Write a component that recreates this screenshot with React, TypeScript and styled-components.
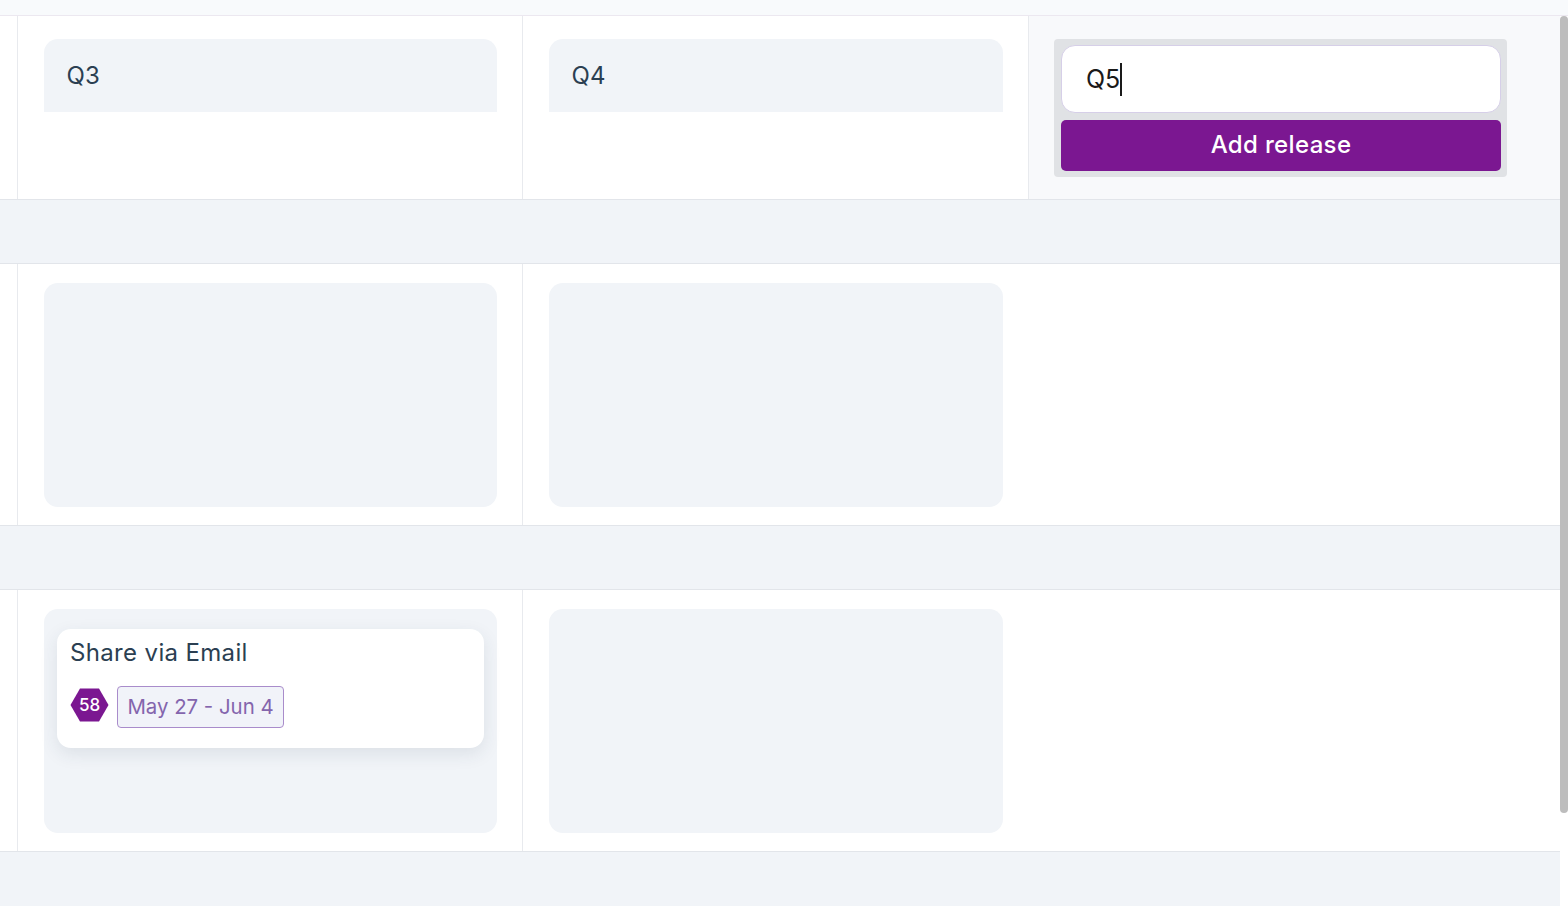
import React from 'react';
import styled, { createGlobalStyle } from 'styled-components';

const GlobalStyle = createGlobalStyle`
  html, body {
    margin: 0;
    height: 100%;
    overflow: hidden;
    background: #ffffff;
    font-family: Inter, "Noto Sans", "Liberation Sans", sans-serif;
    color: #2b3f52;
  }
`;

const Page = styled.div`
  display: flex;
  flex-direction: column;
  height: 906px;
  overflow: hidden;
`;

const TopStrip = styled.div`
  flex: none;
  height: 15px;
  background: #f8fafc;
  border-bottom: 1px solid #ece8f0;
`;

const Body = styled.div`
  flex: 1;
  display: flex;
  min-height: 0;
`;

const Board = styled.div`
  flex: 1;
  min-width: 0;
`;

const ScrollTrack = styled.div`
  flex: none;
  width: 8px;
`;

const ScrollThumb = styled.div`
  height: 797px;
  background: #bdbdbd;
  border-radius: 4px;
`;

const Row = styled.div<{ $height: number }>`
  display: grid;
  grid-template-columns: 18px 505px 506px 1fr;
  height: ${(props) => props.$height}px;
`;

const Band = styled.div<{ $height: number }>`
  height: ${(props) => props.$height}px;
  box-sizing: border-box;
  background: #f1f4f8;
  border-top: 1px solid #e2e5ea;
  border-bottom: 1px solid #e2e5ea;
`;

const BottomBand = styled(Band)`
  border-bottom: 0;
`;

const Cell = styled.div<{ $top: number; $tinted?: boolean; $plain?: boolean }>`
  box-sizing: border-box;
  padding: ${(props) => props.$top}px ${(props) => (props.$plain ? 26 : 25)}px 0 26px;
  border-right: ${(props) => (props.$plain ? '0' : '1px solid #e8eaee')};
  background: ${(props) => (props.$tinted ? '#f8f9fb' : 'transparent')};
`;

const StubCell = styled.div`
  border-right: 1px solid #e8eaee;
`;

const HeaderCard = styled.div`
  height: 73px;
  display: flex;
  align-items: center;
  padding-left: 22.5px;
  background: #f1f4f8;
  border-radius: 14px 14px 0 0;
  font-size: 24px;
  letter-spacing: 0.2px;
`;

const Lane = styled.div`
  height: 224px;
  box-sizing: border-box;
  padding: 20px 13px 0;
  background: #f1f4f8;
  border-radius: 14px;
`;

const Ticket = styled.div`
  height: 119px;
  box-sizing: border-box;
  padding: 8px 13px 0;
  background: #ffffff;
  border-radius: 14px;
  box-shadow: 0 6px 18px rgba(40, 55, 80, 0.1);
`;

const TicketTitle = styled.div`
  font-size: 24px;
  line-height: 32px;
  letter-spacing: 0.35px;
`;

const TicketMeta = styled.div`
  display: flex;
  align-items: flex-start;
  gap: 8px;
  margin-top: 17px;
`;

const Estimate = styled.div`
  position: relative;
  flex: none;
  width: 39px;
  height: 34px;
  margin-top: 2px;
`;

const EstimateLabel = styled.span`
  position: absolute;
  inset: 0;
  display: flex;
  align-items: center;
  justify-content: center;
  color: #ffffff;
  font-size: 17px;
  font-weight: 500;
`;

const DateTag = styled.div`
  box-sizing: border-box;
  height: 42px;
  width: 167px;
  padding-bottom: 2px;
  display: flex;
  align-items: center;
  justify-content: center;
  background: #f1f3f9;
  border: 1px solid #a98ccb;
  border-radius: 4px;
  color: #8465ad;
  font-size: 20.4px;
  white-space: nowrap;
`;

const ReleaseForm = styled.div`
  width: 453px;
  height: 138px;
  box-sizing: border-box;
  margin-left: -1px;
  padding: 6px 6px 6px 7px;
  background: #e0e2e5;
  border-radius: 4px;
`;

const ReleaseInput = styled.div`
  height: 68px;
  box-sizing: border-box;
  display: flex;
  align-items: center;
  padding-left: 24px;
  background: #ffffff;
  border: 1px solid #d6cfe8;
  border-radius: 14px;
  color: #1a1a1a;
  font-size: 25px;
`;

const Caret = styled.span`
  width: 1.5px;
  height: 33px;
  background: #1a1a1a;
`;

const AddButton = styled.button`
  display: block;
  width: 100%;
  height: 51px;
  margin-top: 7px;
  padding: 0 0 2px;
  background: #7b1791;
  border: 0;
  border-radius: 5px;
  color: #ffffff;
  font-family: inherit;
  font-size: 24px;
  font-weight: 500;
  letter-spacing: 0.35px;
`;

const App: React.FC = () => {
  return (
    <Page>
      <GlobalStyle />
      <TopStrip />
      <Body>
        <Board>
          <Row $height={183}>
            <StubCell />
            <Cell $top={23}>
              <HeaderCard>Q3</HeaderCard>
            </Cell>
            <Cell $top={23}>
              <HeaderCard>Q4</HeaderCard>
            </Cell>
            <Cell $top={23} $tinted $plain>
              <ReleaseForm>
                <ReleaseInput>
                  Q5
                  <Caret />
                </ReleaseInput>
                <AddButton>Add release</AddButton>
              </ReleaseForm>
            </Cell>
          </Row>
          <Band $height={65} />
          <Row $height={261}>
            <StubCell />
            <Cell $top={19}>
              <Lane />
            </Cell>
            <Cell $top={19} $plain>
              <Lane />
            </Cell>
            <Cell $top={19} $plain />
          </Row>
          <Band $height={65} />
          <Row $height={261}>
            <StubCell />
            <Cell $top={19}>
              <Lane>
                <Ticket>
                  <TicketTitle>Share via Email</TicketTitle>
                  <TicketMeta>
                    <Estimate>
                      <svg width="39" height="34" viewBox="0 0 39 34">
                        <polygon points="0.5,17 10,0.5 29,0.5 38.5,17 29,33.5 10,33.5" fill="#7b1791" />
                      </svg>
                      <EstimateLabel>58</EstimateLabel>
                    </Estimate>
                    <DateTag>May 27 - Jun 4</DateTag>
                  </TicketMeta>
                </Ticket>
              </Lane>
            </Cell>
            <Cell $top={19} $plain>
              <Lane />
            </Cell>
            <Cell $top={19} $plain />
          </Row>
          <BottomBand $height={55} />
        </Board>
        <ScrollTrack>
          <ScrollThumb />
        </ScrollTrack>
      </Body>
    </Page>
  );
};

export default App;
